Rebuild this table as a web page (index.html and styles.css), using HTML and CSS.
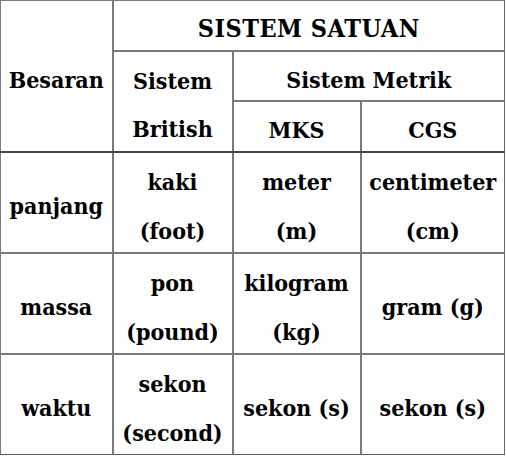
FILE: index.html
```html
<!DOCTYPE html>
<html>
<head>
<meta charset="utf-8">
<link rel="stylesheet" href="styles.css">
</head>
<body>
<table class="units">
  <colgroup>
    <col class="c1"><col class="c2"><col class="c3"><col class="c4">
  </colgroup>
  <thead>
    <tr class="r1">
      <th rowspan="3" class="first"><div class="t">Besaran</div></th>
      <th colspan="3" class="top last"><div class="t caps">SISTEM SATUAN</div></th>
    </tr>
    <tr class="r2">
      <th rowspan="2"><div class="t">Sistem<br>British</div></th>
      <th colspan="2" class="mid last"><div class="t">Sistem Metrik</div></th>
    </tr>
    <tr class="r3">
      <th><div class="t">MKS</div></th>
      <th class="last"><div class="t">CGS</div></th>
    </tr>
  </thead>
  <tbody>
    <tr>
      <td class="first"><div class="t">panjang</div></td>
      <td><div class="t">kaki<br>(foot)</div></td>
      <td><div class="t">meter<br>(m)</div></td>
      <td class="last"><div class="t">centimeter<br>(cm)</div></td>
    </tr>
    <tr>
      <td class="first"><div class="t">massa</div></td>
      <td><div class="t">pon<br>(pound)</div></td>
      <td><div class="t">kilogram<br>(kg)</div></td>
      <td class="last"><div class="t">gram (g)</div></td>
    </tr>
    <tr class="end">
      <td class="first"><div class="t">waktu</div></td>
      <td><div class="t">sekon<br>(second)</div></td>
      <td><div class="t">sekon (s)</div></td>
      <td class="last"><div class="t">sekon (s)</div></td>
    </tr>
  </tbody>
</table>
</body>
</html>
```

FILE: styles.css
```css
html, body {
  margin: 0;
  padding: 0;
  background: #ffffff;
}

body {
  font-family: "DejaVu Serif", serif;
}

.units {
  border-collapse: collapse;
  table-layout: fixed;
  width: 504px;
  color: #000;
}

.c1 { width: 112px; }
.c2 { width: 120px; }
.c3 { width: 128px; }
.c4 { width: 144px; }

.units th,
.units td {
  padding: 0;
  text-align: center;
  vertical-align: middle;
  font-family: "DejaVu Serif Condensed", "DejaVu Serif", serif;
  font-stretch: condensed;
  font-weight: 700;
  font-size: 23px;
  border-top: 2px solid #7a7a7a;
  border-bottom: 2px solid #7a7a7a;
  border-left: 2px solid #7a7a7a;
  border-right: 2px solid #7a7a7a;
}

.units .first { border-left: 1px solid #7a7a7a; }
.units .last { border-right: 1px solid #6a6a6a; }

.r1 th { border-top: 1px solid #7a7a7a; }
.units .top { border-bottom: 1px solid #000; }
.units .mid { border-bottom: 2px solid #7a7a7a; }

.units thead th[rowspan="3"],
.units thead th[rowspan="2"],
.r3 th {
  border-bottom: 2px solid #454545;
}

.units .end td { border-bottom: 1px solid #5a5a5a; }

.t {
  line-height: 49.5px;
  margin-top: 4px;
  margin-bottom: -4px;
  white-space: nowrap;
}

thead .t {
  line-height: 48.5px;
}

.caps {
  font-size: 25px;
  letter-spacing: 0.5px;
}
```
